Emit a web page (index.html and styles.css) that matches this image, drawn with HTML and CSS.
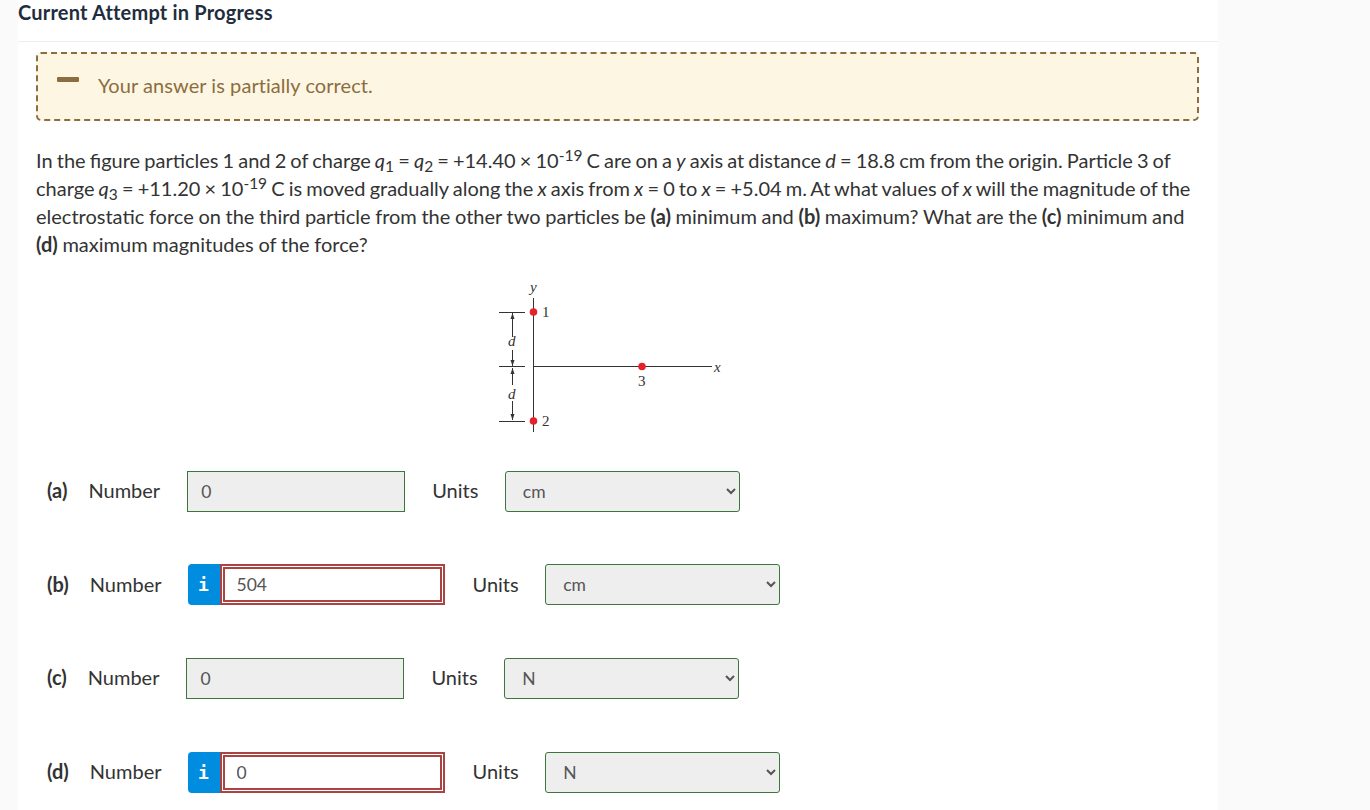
FILE: index.html
```html
<!DOCTYPE html>
<html lang="en">
<head>
    <meta charset="UTF-8">
    <title>Current Attempt in Progress</title>
    <link rel="stylesheet" href="styles.css">
</head>
<body>
    <div class="card">
        <h1 class="attempt-title">Current Attempt in Progress</h1>
        <div class="content">
            <div class="alert">
                <span class="alert-icon"></span>
                <span class="alert-text">Your answer is partially correct.</span>
            </div>
            <p class="question">
                <span class="tight">In the figure particles 1 and 2 of charge <i>q</i><sub>1</sub> = <i>q</i><sub>2</sub> = +14.40 × 10<sup>-19</sup> C are on a <i>y</i> axis at distance <i>d</i> = 18.8 cm from the origin. Particle 3 of<br>
                charge <i>q</i><sub>3</sub> = +11.20 × 10<sup>-19</sup> C is moved gradually along the <i>x</i> axis from <i>x</i> = 0 to <i>x</i> = +5.04 m. At what values of <i>x</i> will the magnitude of the</span><br>
                electrostatic force on the third particle from the other two particles be <b>(a)</b> minimum and <b>(b)</b> maximum? What are the <b>(c)</b> minimum and<br>
                <b>(d)</b> maximum magnitudes of the force?
            </p>
            <svg class="figure" width="260" height="160" viewBox="0 0 260 160">
                <g stroke="#333" stroke-width="1" fill="none">
                    <path d="M53.5 23V157M54 91.5H232"/>
                    <path d="M19 37.5H45M19 91.5H45M19 146.5H45"/>
                    <path d="M32.5 38V62M32.5 75V91M32.5 93V110M32.5 126V145"/>
                </g>
                <g fill="#333">
                    <path d="M32.5 38l-2 6h4zM32.5 91l-2 -6h4zM32.5 93l-2 6h4zM32.5 145l-2 -6h4z"/>
                </g>
                <g fill="#e8202a">
                    <circle cx="53.5" cy="37" r="3.8"/>
                    <circle cx="162" cy="91.5" r="3.8"/>
                    <circle cx="53.5" cy="146" r="3.8"/>
                </g>
                <g class="fig-label">
                    <text x="62" y="42">1</text>
                    <text x="62" y="151">2</text>
                    <text x="158" y="111">3</text>
                </g>
                <g class="fig-label fig-var">
                    <text x="50" y="17">y</text>
                    <text x="28" y="71">d</text>
                    <text x="28" y="124">d</text>
                    <text x="234" y="97">x</text>
                </g>
            </svg>
            <div class="answers">
                <div class="answer-row">
                    <span class="part">(a)</span>
                    <span class="label">Number</span>
                    <input class="num-input correct" type="text" value="0">
                    <span class="label units">Units</span>
                    <select class="unit-select"><option>cm</option></select>
                </div>
                <div class="answer-row">
                    <span class="part">(b)</span>
                    <span class="label">Number</span>
                    <div class="input-group">
                        <span class="info-badge">i</span>
                        <input class="num-input wrong" type="text" value="504">
                    </div>
                    <span class="label units">Units</span>
                    <select class="unit-select"><option>cm</option></select>
                </div>
                <div class="answer-row">
                    <span class="part">(c)</span>
                    <span class="label">Number</span>
                    <input class="num-input correct" type="text" value="0">
                    <span class="label units">Units</span>
                    <select class="unit-select"><option>N</option></select>
                </div>
                <div class="answer-row">
                    <span class="part">(d)</span>
                    <span class="label">Number</span>
                    <div class="input-group">
                        <span class="info-badge">i</span>
                        <input class="num-input wrong" type="text" value="0">
                    </div>
                    <span class="label units">Units</span>
                    <select class="unit-select"><option>N</option></select>
                </div>
            </div>
        </div>
    </div>
</body>
</html>
```

FILE: styles.css
```css
html, body {
    margin: 0;
    padding: 0;
    height: 810px;
    overflow: hidden;
}
body {
    background-color: #fafafa;
    font-family: Lato, sans-serif;
    font-size: 20px;
    color: #333;
}
.card {
    background: #fff;
    margin-left: 18px;
    width: 1200px;
    height: 810px;
}
.attempt-title {
    margin: 0;
    height: 41px;
    font-size: 20px;
    line-height: 25px;
    font-weight: 700;
    letter-spacing: 0.19px;
    color: #1f2d3d;
    border-bottom: 1px solid #eee;
}
.content {
    padding: 10px 19px 0 18px;
}
.alert {
    display: flex;
    align-items: center;
    height: 69px;
    box-sizing: border-box;
    padding-left: 19px;
    background: #fdf6e3;
    border: 2px dashed #8c6d3f;
    border-radius: 5px;
    color: #8c6d3f;
}
.alert-icon {
    width: 22px;
    height: 5px;
    margin-right: 19px;
    margin-bottom: 14px;
    background: #8c6d3f;
    border-radius: 1px;
}
.alert-text {
    padding-bottom: 4px;
    letter-spacing: 0.06px;
}
.question {
    margin: 25px 0 0;
    line-height: 28px;
    color: #333;
    white-space: nowrap;
    word-spacing: -0.48px;
}
.tight {
    word-spacing: -1.02px;
}
.question sub, .question sup {
    font-size: 15.5px;
    line-height: 0;
}
.question sub {
    vertical-align: -4px;
}
.question sup {
    vertical-align: 7px;
}
.figure {
    display: block;
    margin: 17px 0 0 444px;
}
.fig-label {
    font-family: "Liberation Serif", serif;
    font-size: 15px;
    fill: #333;
}
.fig-var {
    font-style: italic;
}
.answers {
    display: grid;
    gap: 52.67px;
    margin-top: 35.6px;
    padding-left: 11px;
}
.answer-row {
    display: flex;
    align-items: center;
    height: 41px;
}
.part {
    font-weight: 700;
    margin-right: 21px;
    padding-bottom: 2px;
    color: #333;
}
.label {
    padding-bottom: 2px;
    color: #333;
}
.units {
    margin: 0 26.5px 0 27px;
}
.input-group {
    display: flex;
    margin: 0 1px 0 26px;
}
.num-input {
    box-sizing: border-box;
    width: 218px;
    height: 41px;
    margin-left: 27px;
    padding: 0 13px;
    font-family: Lato, sans-serif;
    font-size: 17.5px;
    color: #555;
}
.correct {
    background: #eee;
    border: 1px solid #3c763d;
}
.wrong {
    width: 225px;
    margin-left: 0;
    padding: 0 15px;
    background: #fff;
    border: 2px solid #a94442;
    box-shadow: inset 0 0 0 1px #fff, inset 0 0 0 3px #a94442;
    outline: none;
}
.info-badge {
    width: 32px;
    height: 41px;
    line-height: 41px;
    text-align: center;
    background: #008de0;
    color: #fff;
    font-family: "DejaVu Sans Mono", monospace;
    font-weight: 700;
    font-size: 18px;
    border-radius: 4px 0 0 4px;
}
.unit-select {
    box-sizing: border-box;
    width: 235px;
    height: 41px;
    padding: 0 13px;
    font-family: Lato, sans-serif;
    font-size: 17.5px;
    color: #555;
    background-color: #eee;
    border: 1px solid #3c763d;
    border-radius: 3px;
}
```
